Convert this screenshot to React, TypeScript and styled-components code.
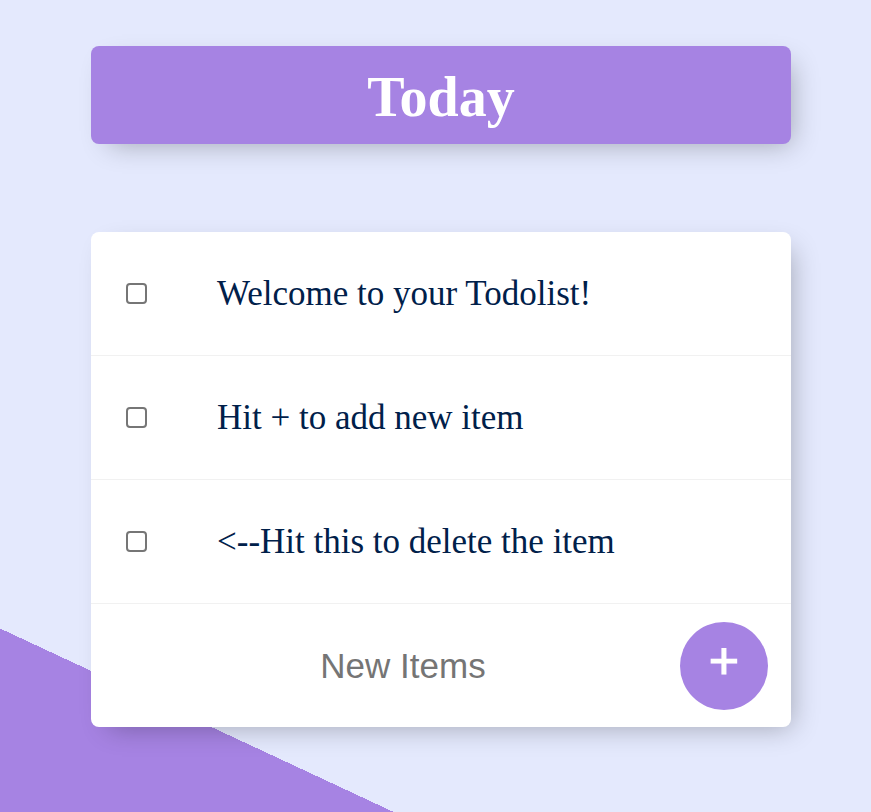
import React, { useState } from 'react';
import styled, { createGlobalStyle } from 'styled-components';

const GlobalStyle = createGlobalStyle`
  html, body {
    margin: 0;
    padding: 0;
  }
  body {
    font-family: 'Liberation Serif', 'Times New Roman', serif;
  }
`;

const purple = '#A683E3';

const Page = styled.div`
  min-height: 812px;
  height: 100vh;
  box-sizing: border-box;
  padding-top: 46px;
  background-color: #e4e9fd;
  background-image: linear-gradient(25deg, ${purple} 15.07%, #e4e9fd 15.07%);
  overflow: hidden;
`;

const Column = styled.div`
  width: 700px;
  margin-left: 91px;
  display: flex;
  flex-direction: column;
  gap: 88px;
`;

const Box = styled.div<{ $heading?: boolean }>`
  background: ${(p) => (p.$heading ? purple : '#fff')};
  border-radius: 8px;
  box-shadow: 8.75px 8.75px 26px -8.75px rgba(0, 0, 0, 0.3);
  text-align: ${(p) => (p.$heading ? 'center' : 'left')};
`;

const Title = styled.h1`
  margin: 0;
  padding: 19px 17px 15px;
  color: #fff;
  font-family: 'Liberation Serif', 'Times New Roman', serif;
  font-size: 56px;
  font-weight: bold;
  line-height: 64px;
`;

const Item = styled.div`
  min-height: 123px;
  display: flex;
  align-items: center;
  border-bottom: 1px solid #f1f1f1;

  &:last-child {
    border-bottom: 0;
  }
`;

const Check = styled.input`
  appearance: none;
  box-sizing: border-box;
  width: 21px;
  height: 21px;
  margin: 35px;
  flex: none;
  border: 2px solid #767676;
  border-radius: 4px;
  background: #fff;
  cursor: pointer;

  &:checked {
    background: #0075ff;
    border-color: #0075ff;
  }
`;

const Label = styled.p<{ $done: boolean }>`
  margin: 0;
  padding: 35px;
  font-size: 35px;
  line-height: 40px;
  font-weight: 200;
  color: #00204a;
  font-family: 'Liberation Serif', 'Times New Roman', serif;
  text-decoration: ${(p) => (p.$done ? 'line-through' : 'none')};
  text-decoration-color: ${purple};
`;

const NewForm = styled.form`
  display: flex;
  align-items: center;
  margin-left: 35px;
  width: 100%;
`;

const TextInput = styled.input`
  box-sizing: border-box;
  width: 554px;
  height: 105px;
  border: none;
  outline: none;
  padding: 0;
  text-align: center;
  font-family: 'Liberation Sans', Arial, sans-serif;
  font-size: 35px;
  color: #000;

  &::placeholder {
    color: #757575;
  }
`;

const AddButton = styled.button`
  width: 88px;
  height: 88px;
  flex: none;
  border: 0;
  border-radius: 50%;
  background-color: ${purple};
  color: #fff;
  font-family: 'Liberation Sans', Arial, sans-serif;
  font-size: 52px;
  line-height: 1;
  -webkit-text-stroke: 1.2px #fff;
  padding: 0 0 10px;
  cursor: pointer;
`;

const initial = [
  'Welcome to your Todolist!',
  'Hit + to add new item',
  '<--Hit this to delete the item',
];

export default function App() {
  const [items, setItems] = useState(initial.map((text) => ({ text, done: false })));
  const [draft, setDraft] = useState('');

  const toggle = (i: number) =>
    setItems((list) => list.map((it, j) => (j === i ? { ...it, done: !it.done } : it)));

  const add = (e: React.FormEvent) => {
    e.preventDefault();
    if (!draft.trim()) return;
    setItems((list) => [...list, { text: draft, done: false }]);
    setDraft('');
  };

  return (
    <Page>
      <GlobalStyle />
      <Column>
        <Box $heading>
          <Title>Today</Title>
        </Box>
        <Box>
          {items.map((it, i) => (
            <Item key={i}>
              <Check type="checkbox" checked={it.done} onChange={() => toggle(i)} />
              <Label $done={it.done}>{it.text}</Label>
            </Item>
          ))}
          <Item>
            <NewForm onSubmit={add}>
              <TextInput
                type="text"
                placeholder="New Items"
                autoComplete="off"
                value={draft}
                onChange={(e) => setDraft(e.target.value)}
              />
              <AddButton type="submit">+</AddButton>
            </NewForm>
          </Item>
        </Box>
      </Column>
    </Page>
  );
}
